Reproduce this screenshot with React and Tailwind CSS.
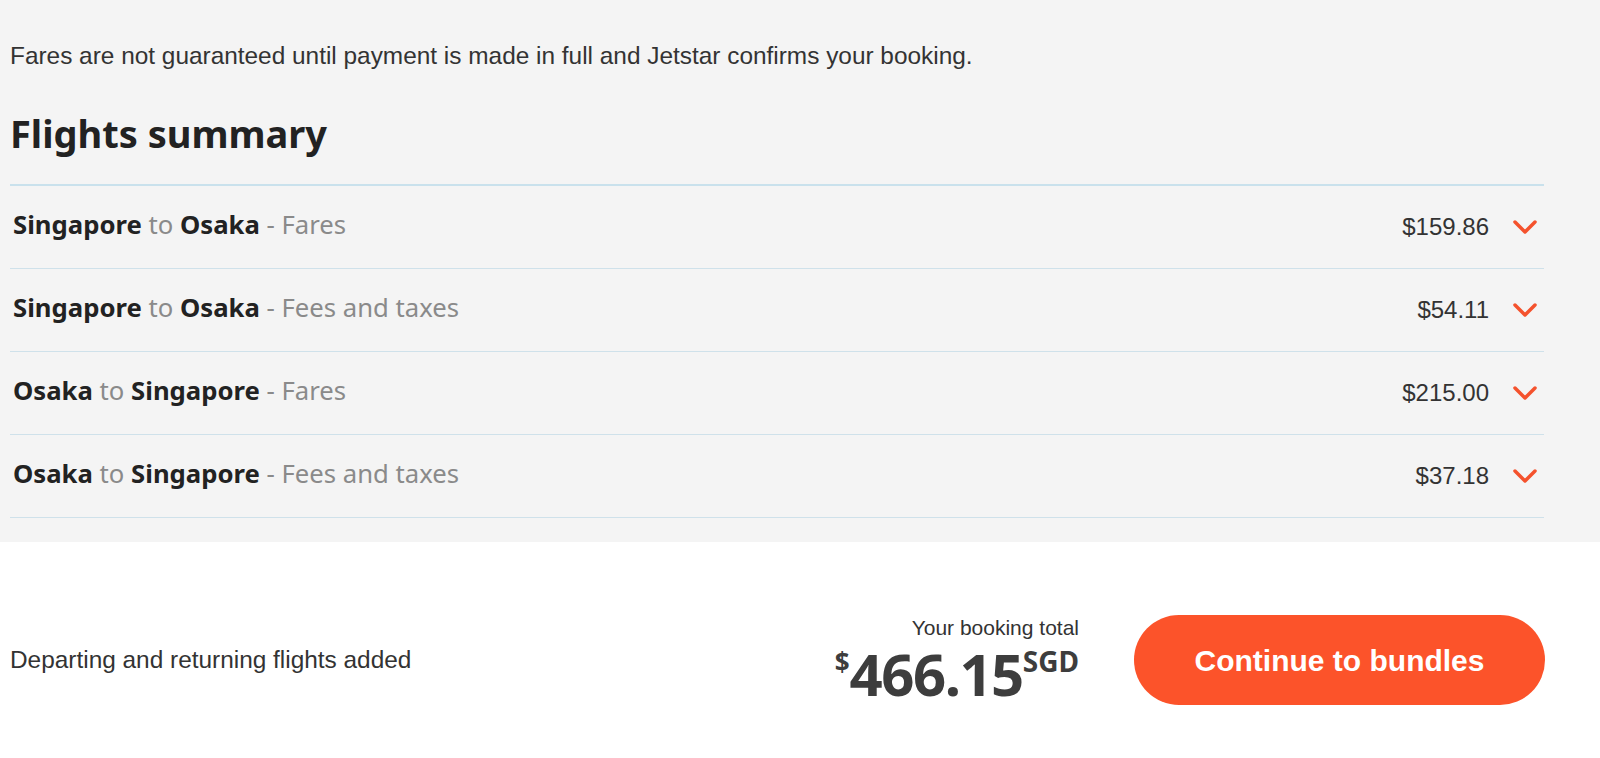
const rows = [
  { from: "Singapore", to: "Osaka", kind: "Fares", price: "$159.86" },
  { from: "Singapore", to: "Osaka", kind: "Fees and taxes", price: "$54.11" },
  { from: "Osaka", to: "Singapore", kind: "Fares", price: "$215.00" },
  { from: "Osaka", to: "Singapore", kind: "Fees and taxes", price: "$37.18" },
];

function Chevron() {
  return (
    <svg width="24" height="14" viewBox="0 0 24 14" fill="none">
      <path d="M2 2l10 10L22 2" stroke="#f4522d" strokeWidth="3.5" strokeLinecap="round" strokeLinejoin="round" />
    </svg>
  );
}

export default function App() {
  const helv = { fontFamily: '"Liberation Sans", Arial, sans-serif' };
  const round = { fontFamily: '"Noto Sans", "Open Sans", sans-serif' };
  return (
    <div className="min-h-screen bg-white">
      <section className="bg-[#f4f4f4] pl-[10px] pr-[56px] pt-[42px] pb-[24px]">
        <p className="text-[24.4px] leading-[28px] text-[#333]" style={helv}>
          Fares are not guaranteed until payment is made in full and Jetstar confirms your booking.
        </p>
        <h2 className="mt-[39px] text-[38px] leading-[48px] font-bold text-[#222]" style={round}>
          Flights summary
        </h2>
        <div className="mt-[27px] border-t-2 border-[#c9e1ec]">
          {rows.map((r, i) => (
            <div key={i} className="flex h-[83px] items-center justify-between border-b border-[#cfe1ea] pl-[3px] pr-[7px]">
              <div className="-mt-[3px] text-[25.7px] text-[#222]" style={round}>
                <span className="font-bold">{r.from}</span>
                <span className="text-[#8a8a8a]"> to </span>
                <span className="font-bold">{r.to}</span>
                <span className="text-[#8a8a8a]"> - {r.kind}</span>
              </div>
              <div className="flex items-center gap-[24px]">
                <span className="text-[24px] text-[#333]" style={helv}>{r.price}</span>
                <Chevron />
              </div>
            </div>
          ))}
        </div>
      </section>
      <div className="flex items-center pl-[10px] pr-[55px] pt-[73px]">
        <p className="flex-1 text-[24.4px] leading-[28px] text-[#333]" style={helv}>Departing and returning flights added</p>
        <div className="mr-[55px] flex flex-col items-end">
          <span className="text-[21px] leading-[22px] text-[#333]" style={helv}>Your booking total</span>
          <div className="mt-[6px] flex items-start font-bold text-[#3d3d3d]" style={round}>
            <span className="mt-[4px] text-[26px] leading-[26px]">$</span>
            <span className="text-[58px] leading-[58px] tracking-[-1.5px]">466.15</span>
            <span className="mt-[2px] text-[28px] leading-[28px]">SGD</span>
          </div>
        </div>
        <button className="flex h-[90px] w-[411px] items-center justify-center rounded-full bg-[#fc532a] text-[30px] font-bold text-white" style={helv}>
          Continue to bundles
        </button>
      </div>
    </div>
  );
}
